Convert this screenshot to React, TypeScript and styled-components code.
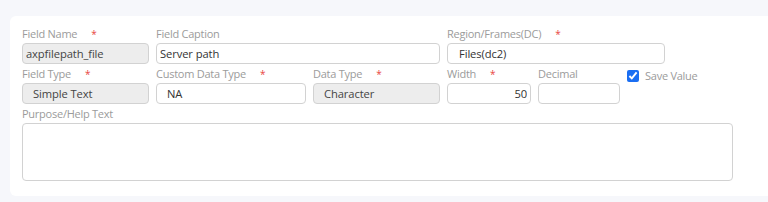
import React from "react";
import styled, { createGlobalStyle } from "styled-components";

const GlobalStyle = createGlobalStyle`
  html, body {
    margin: 0;
    padding: 0;
    background: #f6f7fb;
    font-family: "Open Sans", "Liberation Sans", sans-serif;
    overflow: hidden;
  }
`;

const Page = styled.div`
  width: 768px;
  height: 202px;
  padding-top: 16px;
  box-sizing: border-box;
`;

const Card = styled.div`
  margin-left: 10px;
  width: 780px;
  background: #ffffff;
  border-radius: 6px;
  padding: 8px 0 15px 12px;
  box-sizing: border-box;
`;

const Row = styled.div`
  display: flex;
  gap: 7px;
`;

const Field = styled.div<{ w: number }>`
  display: flex;
  flex-direction: column;
  width: ${({ w }) => w}px;
`;

const Label = styled.label`
  display: flex;
  align-items: flex-end;
  height: 19px;
  padding-bottom: 2px;
  box-sizing: border-box;
  font-size: 11px;
  letter-spacing: -0.25px;
  color: #9b9b9b;
  white-space: nowrap;
`;

const Star = styled.span`
  color: #e8463f;
  font-size: 10px;
  margin-left: 14px;
  align-self: flex-start;
  margin-top: 3px;
`;

const Input = styled.input<{ pad?: number; right?: boolean }>`
  height: 21px;
  width: 100%;
  box-sizing: border-box;
  border: 1px solid #d2d2d2;
  border-radius: 4px;
  padding: 0 ${({ right }) => (right ? 3 : 4)}px 0 ${({ pad }) => pad ?? 4}px;
  font-family: "Open Sans", "Liberation Sans", sans-serif;
  font-size: 11.2px;
  letter-spacing: -0.1px;
  color: #333;
  background: #fff;
  text-align: ${({ right }) => (right ? "right" : "left")};
  outline: none;

  &:disabled {
    background: #ededed;
    color: #444;
  }
`;

const TextArea = styled.textarea`
  width: 711px;
  height: 58px;
  box-sizing: border-box;
  border: 1px solid #d2d2d2;
  border-radius: 4px;
  resize: none;
  outline: none;
  display: block;
`;

const CheckWrap = styled.label`
  display: flex;
  align-items: center;
  align-self: flex-start;
  gap: 6px;
  margin-top: 4px;
  font-size: 11px;
  letter-spacing: -0.25px;
  color: #9b9b9b;
  white-space: nowrap;

  input {
    margin: 0;
    width: 12px;
    height: 12px;
    accent-color: #1a6ef2;
  }
`;

type FieldProps = {
  w: number;
  label: string;
  required?: boolean;
  value?: string;
  disabled?: boolean;
  pad?: number;
  right?: boolean;
};

const FormField = ({ w, label, required, value = "", disabled, pad, right }: FieldProps) => (
  <Field w={w}>
    <Label>
      {label}
      {required && <Star>*</Star>}
    </Label>
    <Input defaultValue={value} disabled={disabled} pad={pad} right={right} />
  </Field>
);

export default function App() {
  return (
    <Page>
      <GlobalStyle />
      <Card>
        <Row>
          <FormField w={127} label="Field Name" required value="axpfilepath_file" disabled pad={3} />
          <FormField w={284} label="Field Caption" value="Server path" pad={3} />
          <FormField w={218} label="Region/Frames(DC)" required value="Files(dc2)" pad={11} />
        </Row>
        <Row>
          <FormField w={127} label="Field Type" required value="Simple Text" disabled pad={10} />
          <FormField w={150} label="Custom Data Type" required value="NA" pad={10} />
          <FormField w={127} label="Data Type" required value="Character" disabled pad={10} />
          <FormField w={84} label="Width" required value="50" right />
          <FormField w={82} label="Decimal" />
          <CheckWrap>
            <input type="checkbox" defaultChecked />
            Save Value
          </CheckWrap>
        </Row>
        <Field w={711}>
          <Label>Purpose/Help Text</Label>
          <TextArea />
        </Field>
      </Card>
    </Page>
  );
}
